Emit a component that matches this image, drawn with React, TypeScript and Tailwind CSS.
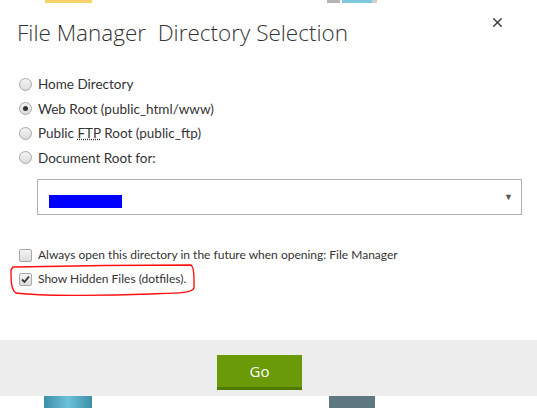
import { X } from "lucide-react";

const Radio = ({ checked }: { checked?: boolean }) => (
  <span className="w-[13px] h-[13px] rounded-full border border-[#a8a8a8] bg-gradient-to-b from-[#f4f4f4] to-[#dcdcdc] flex items-center justify-center shrink-0">
    {checked && <span className="w-[5px] h-[5px] rounded-full bg-[#333]" />}
  </span>
);

const Check = ({ checked }: { checked?: boolean }) => (
  <span className="w-[13px] h-[13px] rounded-[2px] border border-[#a8a8a8] bg-gradient-to-b from-[#f4f4f4] to-[#dcdcdc] flex items-center justify-center shrink-0">
    {checked && (
      <svg width="9" height="9" viewBox="0 0 9 9">
        <path d="M1 4.5 L3.5 7 L8 1.5" stroke="#333" strokeWidth="1.8" fill="none" />
      </svg>
    )}
  </span>
);

const body = { fontFamily: 'Lato, "Open Sans", sans-serif' };

export default function App() {
  return (
    <div className="w-[537px] h-[408px] bg-white relative overflow-hidden text-[#333]" style={{ fontFamily: '"Open Sans", "Noto Sans", sans-serif' }}>
      {/* background page peeking at top */}
      <div className="h-[3px] flex">
        <div className="ml-[45px] w-[47px] h-[3px] bg-[#f7d36a]" />
        <div className="ml-[235px] w-[13px] h-[3px] bg-[#b4b4b4]" />
        <div className="ml-[2px] w-[30px] h-[3px] bg-[#7cc8dc]" />
        <div className="w-[5px] h-[3px] bg-[#d0d0d0]" />
      </div>

      <div className="flex items-start justify-between pl-[17px] pr-[32px] pt-[15px]">
        <h1 className="text-[22.5px] font-light leading-[30px]">File Manager&nbsp; Directory Selection</h1>
        <X className="w-[15px] h-[15px] mt-[-3px] text-[#444]" strokeWidth={2.5} />
      </div>

      <div className="pl-[19px] pt-[27px] flex flex-col gap-[6px] text-[13.5px] leading-[18.5px]" style={body}>
        <label className="flex items-center gap-[6px]"><Radio /><span>Home Directory</span></label>
        <label className="flex items-center gap-[6px]"><Radio checked /><span>Web Root (public_html/www)</span></label>
        <label className="flex items-center gap-[6px]"><Radio /><span>Public <abbr className="underline decoration-dotted">FTP</abbr> Root (public_ftp)</span></label>
        <label className="flex items-center gap-[6px]"><Radio /><span>Document Root for:</span></label>
      </div>

      <div className="ml-[37px] mr-[15px] mt-[12px] h-[36px] border border-[#b0b0b0] flex items-center justify-between pl-[11px] pr-[8px]">
        <div className="w-[73px] h-[13px] bg-[#0000ff] mt-[8px]" />
        <span className="text-[9px] text-[#555]">▼</span>
      </div>

      <div className="pl-[19px] pt-[31px] flex flex-col gap-[6px] text-[12px] leading-[18px]" style={body}>
        <label className="flex items-center gap-[6px]"><Check /><span>Always open this directory in the future when opening: File Manager</span></label>
        <label className="flex items-center gap-[6px]"><Check checked /><span>Show Hidden Files (dotfiles).</span></label>
      </div>

      {/* hand-drawn annotation */}
      <svg className="absolute left-0 top-0 pointer-events-none" width="537" height="408" viewBox="0 0 537 408">
        <path d="M13 267 C60 266 140 265 191 265 C195 268 194 280 194 288 C192 293 180 293 150 294 C100 296 40 296 16 293 C11 290 11 280 11 270 Z" stroke="#ff1010" strokeWidth="1.4" fill="none" />
      </svg>

      <div className="absolute left-0 right-0 top-[340px] h-[56px] bg-[#ededed] flex items-start pt-[15px] pl-[217px]">
        <button className="w-[85px] h-[35px] bg-[#6a9a08] border-b-[3px] border-[#4f7a03] text-white text-[15px]">Go</button>
      </div>

      <div className="absolute left-0 right-0 top-[396px] h-[12px] flex">
        <div className="ml-[44px] w-[48px] bg-gradient-to-r from-[#3a8ea8] via-[#6cc2da] to-[#3a8ea8]" />
        <div className="ml-[237px] w-[46px] bg-[#5f7780]" />
      </div>
    </div>
  );
}
